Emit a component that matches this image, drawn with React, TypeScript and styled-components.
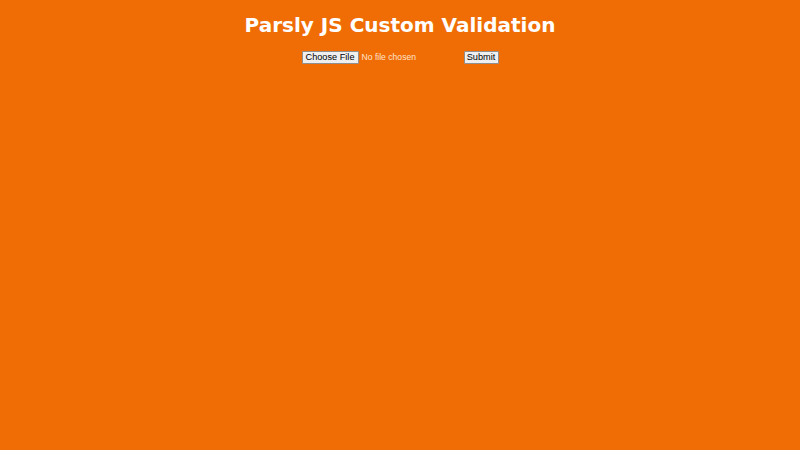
import React from "react";
import styled, { createGlobalStyle } from "styled-components";

const GlobalStyle = createGlobalStyle`
  html, body {
    margin: 0;
    padding: 0;
    background: #f06d06;
    min-height: 100%;
  }
  body {
    font-family: "DejaVu Sans", sans-serif;
    color: #ffffff;
  }
`;

const Page = styled.div`
  display: flex;
  flex-direction: column;
  align-items: center;
  padding-top: 11px;
  min-height: 450px;
  box-sizing: border-box;
`;

const Title = styled.h1`
  margin: 0;
  font-family: "DejaVu Sans", sans-serif;
  font-weight: bold;
  font-size: 20px;
  line-height: 28px;
  color: #ffffff;
`;

const Form = styled.form`
  display: flex;
  align-items: flex-start;
  margin-top: 12px;
  font-family: "Liberation Sans", Arial, sans-serif;
  font-size: 9px;
`;

const controlButton = `
  font-family: "Liberation Sans", Arial, sans-serif;
  font-size: 9.2px;
  line-height: 11px;
  color: #000;
  background: #efefef;
  border: 1px solid #8f8f8f;
  border-radius: 1px;
  height: 13px;
  margin: 0;
  box-sizing: border-box;
`;

const FileInput = styled.input`
  display: block;
  width: 162px;
  height: 13px;
  padding: 0;
  margin: 0;
  color: #ffe2cc;
  font-family: "Liberation Sans", Arial, sans-serif;
  font-size: 8.6px;
  line-height: 13px;
  &::file-selector-button {
    ${controlButton}
    padding: 0 3px;
    margin-right: 3px;
    vertical-align: top;
  }
`;

const SubmitButton = styled.input`
  ${controlButton}
  display: block;
  width: 35px;
  padding: 0;
`;

export default function App() {
  return (
    <>
      <GlobalStyle />
      <Page>
        <Title>Parsly JS Custom Validation</Title>
        <Form onSubmit={(e) => e.preventDefault()}>
          <FileInput type="file" />
          <SubmitButton type="submit" value="Submit" />
        </Form>
      </Page>
    </>
  );
}
